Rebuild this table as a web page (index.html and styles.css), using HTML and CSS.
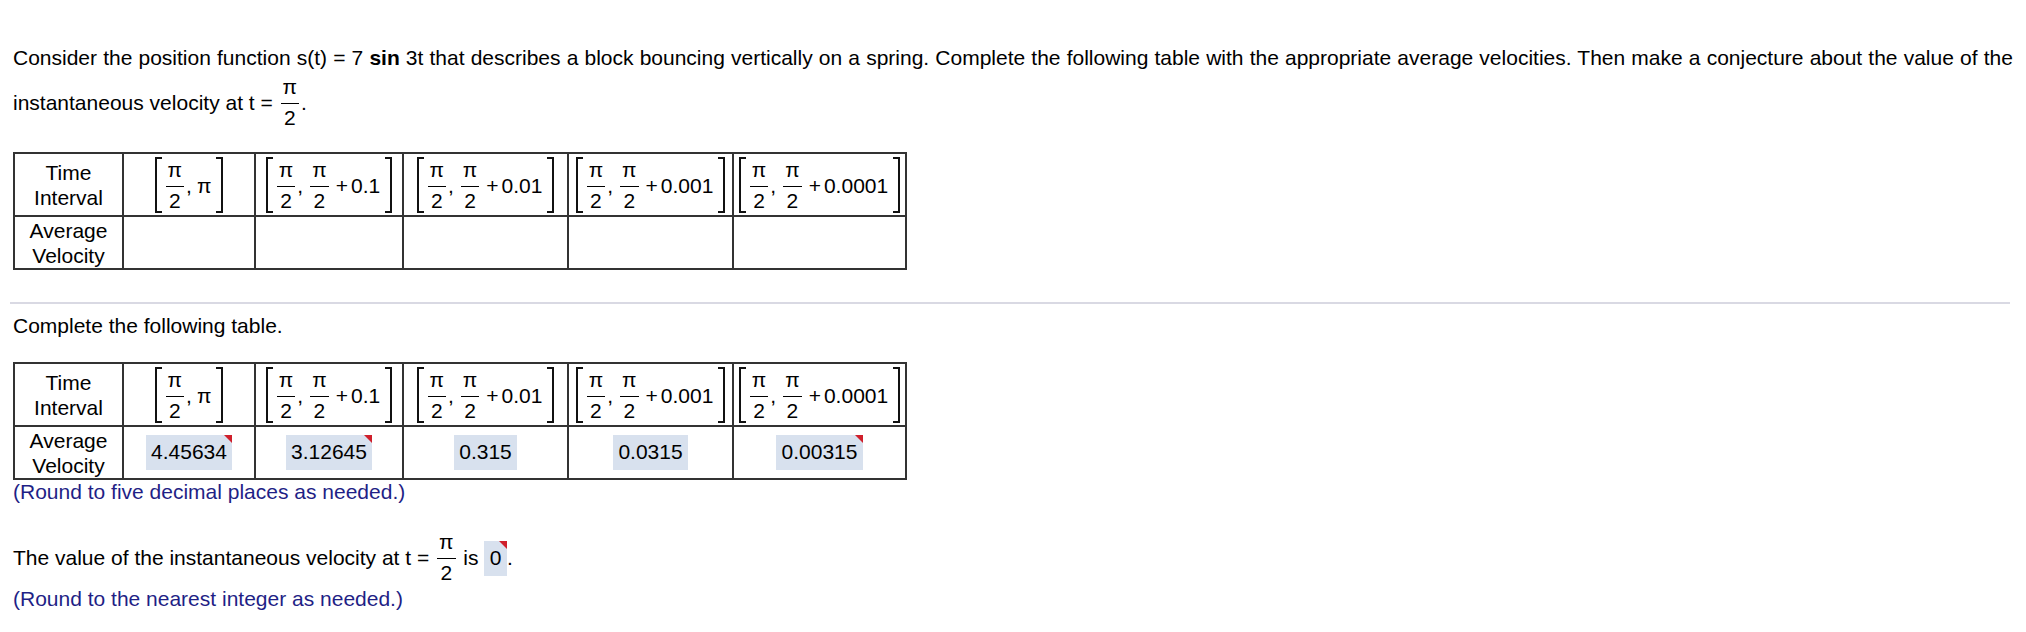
FILE: index.html
```html
<!DOCTYPE html>
<html lang="en">
<head>
<meta charset="utf-8">
<title>Average velocity</title>
<link rel="stylesheet" href="styles.css">
</head>
<body>
<div class="page">
  <p class="intro"><span class="ln1">Consider the position function s(t) = 7 <b>sin</b> 3t that describes a block bouncing vertically on a spring. Complete the following table with the appropriate average velocities. Then make a conjecture about the value of the</span><br>instantaneous velocity at t = <span class="frac"><span class="num">π</span><span class="den">2</span></span>.</p>

  <table class="vt vt1">
    <tr class="r1">
      <td class="c1 hd">Time<br>Interval</td>
      <td class="c2"><span class="intv"><span class="lb"></span><span class="mrow"><span class="frac"><span class="num">π</span><span class="den">2</span></span><span class="cm">,</span>π</span><span class="rb"></span></span></td>
      <td class="c3"><span class="intv"><span class="lb"></span><span class="mrow"><span class="frac"><span class="num">π</span><span class="den">2</span></span><span class="cm">,</span><span class="frac"><span class="num">π</span><span class="den">2</span></span><span class="op">+</span>0.1</span><span class="rb"></span></span></td>
      <td class="c4"><span class="intv"><span class="lb"></span><span class="mrow"><span class="frac"><span class="num">π</span><span class="den">2</span></span><span class="cm">,</span><span class="frac"><span class="num">π</span><span class="den">2</span></span><span class="op">+</span>0.01</span><span class="rb"></span></span></td>
      <td class="c5"><span class="intv"><span class="lb"></span><span class="mrow"><span class="frac"><span class="num">π</span><span class="den">2</span></span><span class="cm">,</span><span class="frac"><span class="num">π</span><span class="den">2</span></span><span class="op">+</span>0.001</span><span class="rb"></span></span></td>
      <td class="c6"><span class="intv"><span class="lb"></span><span class="mrow"><span class="frac"><span class="num">π</span><span class="den">2</span></span><span class="cm">,</span><span class="frac"><span class="num">π</span><span class="den">2</span></span><span class="op">+</span>0.0001</span><span class="rb"></span></span></td>
    </tr>
    <tr class="r2">
      <td class="hd">Average<br>Velocity</td>
      <td></td><td></td><td></td><td></td><td></td>
    </tr>
  </table>

  <div class="sep"></div>

  <p class="lead">Complete the following table.</p>

  <table class="vt vt2">
    <tr class="r1">
      <td class="c1 hd">Time<br>Interval</td>
      <td class="c2"><span class="intv"><span class="lb"></span><span class="mrow"><span class="frac"><span class="num">π</span><span class="den">2</span></span><span class="cm">,</span>π</span><span class="rb"></span></span></td>
      <td class="c3"><span class="intv"><span class="lb"></span><span class="mrow"><span class="frac"><span class="num">π</span><span class="den">2</span></span><span class="cm">,</span><span class="frac"><span class="num">π</span><span class="den">2</span></span><span class="op">+</span>0.1</span><span class="rb"></span></span></td>
      <td class="c4"><span class="intv"><span class="lb"></span><span class="mrow"><span class="frac"><span class="num">π</span><span class="den">2</span></span><span class="cm">,</span><span class="frac"><span class="num">π</span><span class="den">2</span></span><span class="op">+</span>0.01</span><span class="rb"></span></span></td>
      <td class="c5"><span class="intv"><span class="lb"></span><span class="mrow"><span class="frac"><span class="num">π</span><span class="den">2</span></span><span class="cm">,</span><span class="frac"><span class="num">π</span><span class="den">2</span></span><span class="op">+</span>0.001</span><span class="rb"></span></span></td>
      <td class="c6"><span class="intv"><span class="lb"></span><span class="mrow"><span class="frac"><span class="num">π</span><span class="den">2</span></span><span class="cm">,</span><span class="frac"><span class="num">π</span><span class="den">2</span></span><span class="op">+</span>0.0001</span><span class="rb"></span></span></td>
    </tr>
    <tr class="r2">
      <td class="hd">Average<br>Velocity</td>
      <td><span class="ans">4.45634<i class="flag"></i></span></td>
      <td><span class="ans">3.12645<i class="flag"></i></span></td>
      <td><span class="ans">0.315</span></td>
      <td><span class="ans">0.0315</span></td>
      <td><span class="ans">0.00315<i class="flag"></i></span></td>
    </tr>
  </table>
  <p class="note">(Round to five decimal places as needed.)</p>

  <p class="conj">The value of the instantaneous velocity at t = <span class="frac"><span class="num">π</span><span class="den">2</span></span> is <span class="ans">0<i class="flag"></i></span>.</p>
  <p class="note note2">(Round to the nearest integer as needed.)</p>
</div>
</body>
</html>
```
FILE: styles.css
```css
html, body {
  margin: 0;
  padding: 0;
  background: #ffffff;
}

.page {
  font-family: "Liberation Sans", Arial, Helvetica, sans-serif;
  font-size: 21px;
  color: #000000;
  padding: 38px 8px 0 13px;
}

p {
  margin: 0;
  line-height: 24px;
}

.intro {
  line-height: 40px;
  white-space: nowrap;
}
.ln1 {
  word-spacing: 0.3px;
}

/* stacked fraction */
.frac {
  display: inline-block;
  vertical-align: -15px;
  text-align: center;
  line-height: 17px;
  margin: 0 2px;
}
.num {
  display: block;
  padding: 0 2px 8px;
}
.den {
  display: block;
  border-top: 1px solid #000;
  padding: 5px 2px 0;
}

/* tables */
.vt {
  border-collapse: collapse;
  table-layout: fixed;
  margin-top: 26px;
}
.vt td {
  border: 2px solid #333333;
  padding: 0;
  text-align: center;
  vertical-align: middle;
}
.vt .r1 td { height: 61px; }
.vt .r2 td { height: 51px; }

.c1 { width: 107px; }
.c2 { width: 130px; }
.c3 { width: 146px; }
.c4 { width: 163px; }
.c5 { width: 163px; }
.c6 { width: 171px; }

.hd {
  line-height: 25px;
}

.intv {
  display: inline-flex;
  align-items: center;
  vertical-align: middle;
}
.lb, .rb {
  width: 7px;
  height: 56px;
  box-sizing: border-box;
  border: 2px solid #111;
}
.lb { border-right: 0; margin-right: 2px; }
.rb { border-left: 0; margin-left: 5px; }

.mrow {
  display: inline-block;
  line-height: 24px;
  white-space: nowrap;
}
.cm {
  margin-right: 5px;
}
.op {
  margin: 0 3px 0 5px;
}

/* answers */
.ans {
  display: inline-block;
  position: relative;
  background: #d8e1ee;
  line-height: 33px;
  padding: 0 5.5px 2px;
  vertical-align: middle;
}
.conj .ans {
  vertical-align: baseline;
}
.flag {
  position: absolute;
  top: 0;
  right: 0;
  width: 0;
  height: 0;
  border-top: 8px solid #cf1f2b;
  border-left: 8px solid transparent;
}

.sep {
  margin: 32px 8px 0 -3px;
  border-top: 2px solid #d9d9e3;
}

.lead {
  margin-top: 10px;
}

.vt2 {
  margin-top: 24px;
}

.note {
  color: #1f1f86;
}

.conj {
  margin-top: 29px;
}

.note2 {
  margin-top: 6px;
}
```
